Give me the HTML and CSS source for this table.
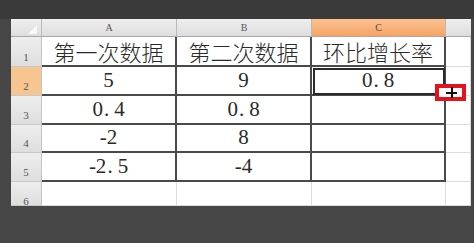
FILE: index.html
```html
<!DOCTYPE html>
<html lang="zh-CN">
<head>
<meta charset="utf-8">
<title>Excel 环比增长率</title>
<link rel="stylesheet" href="styles.css">
</head>
<body>
<div class="screen">
  <div class="sheet">
    <div class="grid">
      <div class="hd corner"><span class="tri"></span></div>
      <div class="hd col">A</div>
      <div class="hd col">B</div>
      <div class="hd col sel">C</div>
      <div class="hd col last"></div>

      <div class="hd row">1</div>
      <div class="c d zh">第一次数据</div>
      <div class="c d zh">第二次数据</div>
      <div class="c d zh">环比增长率</div>
      <div class="c"></div>

      <div class="hd row sel">2</div>
      <div class="c d num">5</div>
      <div class="c d num">9</div>
      <div class="c d num active">0<span class="dot">.</span>8</div>
      <div class="c"></div>

      <div class="hd row">3</div>
      <div class="c d num">0<span class="dot">.</span>4</div>
      <div class="c d num">0<span class="dot">.</span>8</div>
      <div class="c d"></div>
      <div class="c"></div>

      <div class="hd row">4</div>
      <div class="c d num">-2</div>
      <div class="c d num">8</div>
      <div class="c d"></div>
      <div class="c"></div>

      <div class="hd row">5</div>
      <div class="c d num">-2<span class="dot">.</span>5</div>
      <div class="c d num">-4</div>
      <div class="c d"></div>
      <div class="c"></div>

      <div class="hd row r6">6</div>
      <div class="c"></div>
      <div class="c"></div>
      <div class="c"></div>
      <div class="c"></div>
    </div>
    <div class="handle"><span class="cross"></span></div>
  </div>
</div>
</body>
</html>
```

FILE: styles.css
```css
html, body {
  margin: 0;
  padding: 0;
}
body {
  width: 474px;
  height: 243px;
  overflow: hidden;
  background: #444444;
}
.screen {
  width: 474px;
  height: 243px;
  background: linear-gradient(#3a3a3a 0, #3a3a3a 19px, #464646 19px, #464646 100%);
  padding: 19px 0 0 11px;
  box-sizing: border-box;
}
.sheet {
  position: relative;
  width: 460px;
  height: 187px;
  background: #ffffff;
  overflow: visible;
}
.grid {
  display: grid;
  grid-template-columns: 31px 135px 135px 134px 25px;
  grid-template-rows: 18px 30px 29px 29px 28px 29px 24px;
  width: 460px;
  height: 187px;
  overflow: hidden;
}
.grid > div {
  box-sizing: border-box;
  border-right: 1px solid #dcdcdc;
  border-bottom: 1px solid #dcdcdc;
}
.hd {
  background: linear-gradient(#eeeeee, #dedede);
  font-family: "Liberation Serif", "DejaVu Serif", serif;
  font-size: 10px;
  color: #555555;
  display: flex;
  justify-content: center;
}
.hd.col {
  align-items: center;
  border-right-color: #b9b9b9;
  border-bottom-color: #a8a8a8;
}
.hd.col.last {
  border-right: none;
}
.hd.row {
  align-items: flex-end;
  padding-bottom: 3px;
  border-right-color: #c4c4c4;
  border-bottom-color: #c8c8c8;
  font-size: 11px;
}
.hd.row.r6 {
  padding-bottom: 0;
  align-items: flex-end;
  line-height: 8px;
  overflow: hidden;
}
.hd.sel.col {
  background: linear-gradient(#fbc393, #f5a464);
  color: #5a4a3a;
}
.hd.sel.row {
  background: #f7c590;
}
.corner {
  position: relative;
  border-right-color: #b9b9b9 !important;
  border-bottom-color: #a8a8a8 !important;
}
.tri {
  position: absolute;
  right: 4px;
  bottom: 2px;
  width: 0;
  height: 0;
  border-left: 9px solid transparent;
  border-bottom: 9px solid #f8f8f8;
}
.c {
  background: #ffffff;
  display: flex;
  justify-content: center;
  align-items: flex-end;
  color: #2a2a2a;
}
.grid > .d {
  border-right: 2px solid #4a4a4a;
  border-bottom: 2px solid #4a4a4a;
}
.zh {
  font-family: "Noto Sans CJK SC", "Noto Sans", sans-serif;
  font-size: 22px;
  line-height: 26px;
  padding-bottom: 1px;
  font-weight: 300;
}
.num {
  font-family: "Liberation Serif", "DejaVu Serif", serif;
  font-size: 21px;
  line-height: 22px;
  padding-bottom: 3px;
}
.dot {
  margin-right: 5px;
  margin-left: 1px;
}
.grid > .active {
  outline: 2px solid #2b2b2b;
  outline-offset: -3px;
}
.handle {
  position: absolute;
  left: 424px;
  top: 65px;
  width: 31px;
  height: 17px;
  box-sizing: border-box;
  border: 4px solid #e3141b;
  background: #ffffff;
}
.cross {
  position: absolute;
  left: 7px;
  top: -1px;
  width: 11px;
  height: 11px;
  background:
    linear-gradient(#111, #111) center / 11px 2px no-repeat,
    linear-gradient(#111, #111) center / 2px 11px no-repeat;
}
```
